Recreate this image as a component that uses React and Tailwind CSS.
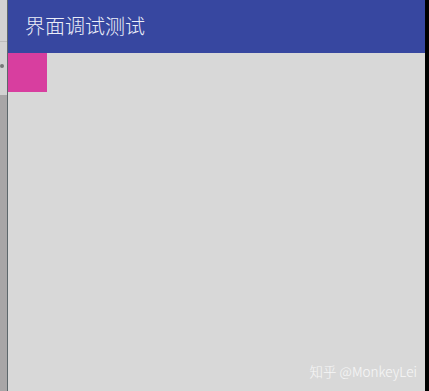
export default function App() {
  return (
    <div className="w-[429px] h-[391px] flex bg-black overflow-hidden" style={{ fontFamily: '"Noto Sans CJK SC", Roboto, sans-serif' }}>
      <div className="w-[7px] h-full flex flex-col">
        <div className="h-[95px] bg-[#d2d2d2] relative">
          <div className="absolute left-0 right-0 top-[41px] h-px bg-[#bcbcbc]" />
          <div className="absolute left-0 top-[64px] w-[4px] h-[4px] rounded-full bg-[#777]" />
        </div>
        <div className="flex-1 bg-[#a8a6a7]" />
      </div>
      <div className="w-px h-full bg-[#5d676b]" />
      <div className="w-[417px] h-full bg-[#d8d8d8] flex flex-col relative">
        <div className="h-[53px] bg-[#3747a0] flex items-center pl-[17px] pb-[2px]">
          <span className="text-[20px] font-light text-[#eceef8] leading-none">界面调试测试</span>
        </div>
        <div className="w-[39px] h-[39px] bg-[#d83e9f]" />
        <div className="absolute right-[8px] bottom-[13px] text-[13.5px] font-light text-white/80 leading-none">知乎 @MonkeyLei</div>
      </div>
    </div>
  );
}
